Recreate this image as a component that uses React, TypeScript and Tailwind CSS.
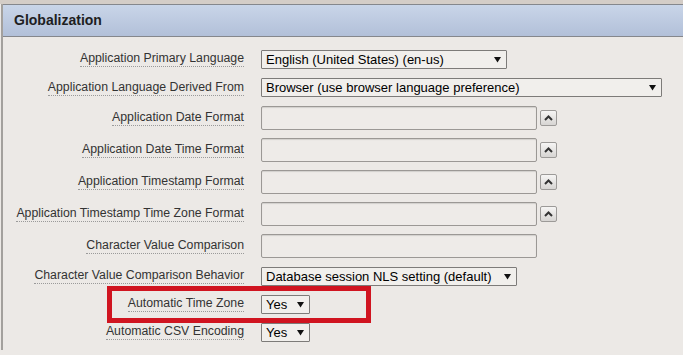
import React from 'react';

type Row = {
  label: string;
  kind: 'select' | 'text';
  value?: string;
  width?: number;
  picker?: boolean;
  h: string;
};

const rows: Row[] = [
  { label: 'Application Primary Language', kind: 'select', value: 'English (United States) (en-us)', width: 246, h: 'h-[28px]' },
  { label: 'Application Language Derived From', kind: 'select', value: 'Browser (use browser language preference)', width: 401, h: 'h-[29px]' },
  { label: 'Application Date Format', kind: 'text', picker: true, h: 'h-[32px]' },
  { label: 'Application Date Time Format', kind: 'text', picker: true, h: 'h-[32px]' },
  { label: 'Application Timestamp Format', kind: 'text', picker: true, h: 'h-[32px]' },
  { label: 'Application Timestamp Time Zone Format', kind: 'text', picker: true, h: 'h-[32px]' },
  { label: 'Character Value Comparison', kind: 'text', h: 'h-[32px]' },
  { label: 'Character Value Comparison Behavior', kind: 'select', value: 'Database session NLS setting (default)', width: 256, h: 'h-[28px]' },
  { label: 'Automatic Time Zone', kind: 'select', value: 'Yes', width: 49, h: 'h-[28px]' },
  { label: 'Automatic CSV Encoding', kind: 'select', value: 'Yes', width: 49, h: 'h-[28px]' },
];

const FakeSelect: React.FC<{ value: string; width: number }> = ({ value, width }) => (
  <div
    className="h-[19px] flex items-center justify-between rounded-[1px] border border-[#7d7b79] bg-[#f1efec] pl-[4px] pr-[5px] text-[13px] leading-none text-black"
    style={{ width }}
  >
    <span className="whitespace-nowrap">{value}</span>
    <svg width="7" height="7" viewBox="0 0 7 7">
      <path d="M0 1 L7 1 L3.5 6.5 Z" fill="#111" />
    </svg>
  </div>
);

const PickerButton: React.FC = () => (
  <div className="ml-[3px] w-[17px] h-[16px] flex items-center justify-center rounded-[2px] border border-[#9c9a98] bg-gradient-to-b from-[#f6f5f4] to-[#d7d5d3]">
    <svg width="9" height="6" viewBox="0 0 9 6">
      <path d="M1 5 L4.5 1.5 L8 5" fill="none" stroke="#333" strokeWidth="2" />
    </svg>
  </div>
);

const App: React.FC = () => {
  return (
    <div className="w-[683px] h-[355px] overflow-hidden bg-[#ece9e6] relative font-['Liberation_Sans',Arial,sans-serif]">
      <div className="h-[4px] bg-[#d4cdc7]" />
      <div className="ml-[1px] border-l-2 border-[#a3a09d] h-[346px]">
        <div className="h-[33px] border-t border-b border-[#85878c] bg-gradient-to-b from-[#c9d5e8] to-[#b2c0d9] flex items-center pl-[11px]">
          <span className="text-[14px] font-bold text-[#1e1e22]">Globalization</span>
        </div>
        <div className="pt-[8px] flex flex-col">
          {rows.map((r) => (
            <div key={r.label} className={`${r.h} grid grid-cols-[242px_1fr] gap-x-[16px] items-center`}>
              <div className="flex justify-end">
                <span className="text-[12.3px] leading-[14px] text-[#333] whitespace-nowrap border-b border-dotted border-[#9a9a9a] pb-[1px] mr-[1px]">
                  {r.label}
                </span>
              </div>
              <div className="flex items-center">
                {r.kind === 'select' ? (
                  <FakeSelect value={r.value ?? ''} width={r.width ?? 100} />
                ) : (
                  <>
                    <div className="w-[276px] h-[24px] rounded-[2px] border border-[#9b9895] bg-[#eeebe8] shadow-[inset_0_1px_1px_rgba(0,0,0,0.12)]" />
                    {r.picker ? <PickerButton /> : null}
                  </>
                )}
              </div>
            </div>
          ))}
        </div>
      </div>
      <div className="absolute left-[107px] top-[286px] w-[264px] h-[37px] border-[5px] border-[#d01420]" />
    </div>
  );
};

export default App;
